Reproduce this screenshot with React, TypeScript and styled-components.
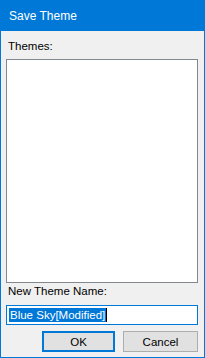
import styled, { createGlobalStyle } from "styled-components"

const Global = createGlobalStyle`
  html, body { margin: 0; padding: 0; background: #f0f0f0; }
  body { font-family: "Liberation Sans", Arial, sans-serif; font-size: 11px; }
`

const Window = styled.div`
  width: 205px;
  height: 358px;
  box-sizing: border-box;
  border: 1px solid #0078d7;
  border-top: none;
  background: #f0f0f0;
  display: flex;
  flex-direction: column;
`

const TitleBar = styled.div`
  height: 31px;
  background: #0078d7;
  color: #fff;
  display: flex;
  align-items: center;
  padding-left: 9px;
  margin: 0 -1px;
  font-size: 12px;
`

const Body = styled.div`
  flex: 1;
  display: flex;
  flex-direction: column;
  padding: 8px 6px 0 5px;
`

const Label = styled.div`
  color: #000;
  font-size: 11.5px;
  line-height: 15px;
  padding-left: 2px;
`

const ListBox = styled.div`
  margin-top: 5px;
  height: 224px;
  box-sizing: border-box;
  border: 1px solid #828790;
  background: #fff;
  margin-bottom: 1px;
`

const TextBox = styled.div`
  margin-top: 6px;
  height: 20px;
  box-sizing: border-box;
  border: 1px solid #0078d7;
  background: #fff;
  display: flex;
  align-items: center;
  padding-left: 2px;
`

const Selected = styled.span`
  background: #0078d7;
  color: #fff;
  font-size: 11.5px;
  line-height: 14px;
  padding: 0 1px;
`

const Caret = styled.span`
  width: 1px;
  height: 14px;
  background: #000;
`

const Buttons = styled.div`
  margin-top: 6px;
  display: flex;
  justify-content: flex-end;
  gap: 8px;
`

const Button = styled.button<{ $default?: boolean }>`
  width: ${(p) => (p.$default ? "73px" : "75px")};
  height: 21px;
  box-sizing: border-box;
  background: #e1e1e1;
  border: ${(p) => (p.$default ? "2px solid #0078d7" : "1px solid #adadad")};
  font-family: "Liberation Sans", Arial, sans-serif;
  font-size: 11.5px;
  color: #000;
  padding: 0;
`

export default function App() {
  return (
    <>
      <Global />
      <Window>
        <TitleBar>Save Theme</TitleBar>
        <Body>
          <Label>Themes:</Label>
          <ListBox />
          <Label>New Theme Name:</Label>
          <TextBox>
            <Selected>Blue Sky[Modified]</Selected>
            <Caret />
          </TextBox>
          <Buttons>
            <Button $default>OK</Button>
            <Button>Cancel</Button>
          </Buttons>
        </Body>
      </Window>
    </>
  )
}
